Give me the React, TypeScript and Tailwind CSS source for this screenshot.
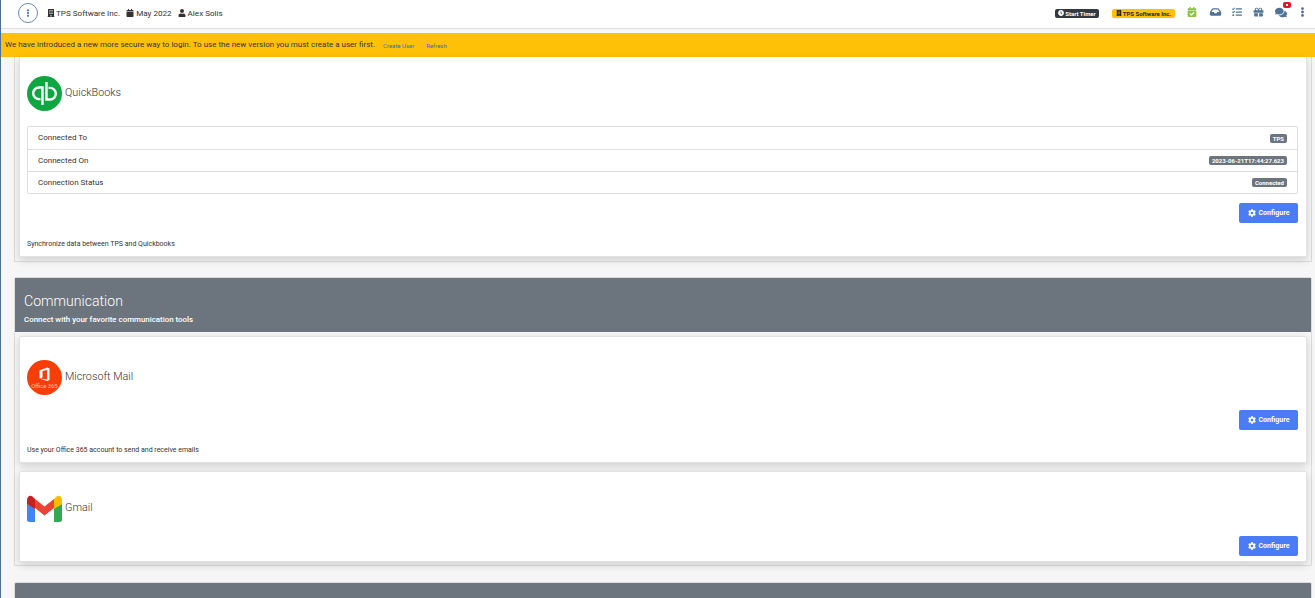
import type { ReactNode } from "react";
import {
  FaBuilding,
  FaCalendar,
  FaCalendarCheck,
  FaClock,
  FaCog,
  FaComments,
  FaEllipsisV,
  FaGift,
  FaInbox,
  FaTasks,
  FaUser,
} from "react-icons/fa";

function ConfigureButton() {
  return (
    <button className="flex h-5 w-[59px] items-center justify-center gap-[3px] rounded-[2px] bg-[#4a7cf6] text-[7px] font-bold text-white">
      <FaCog className="h-2 w-2" />
      Configure
    </button>
  );
}

function Card({ className, children }: { className: string; children: ReactNode }) {
  return (
    <div className={`mx-1 border border-[#e2e2e2] bg-white pr-2 pl-[7px] shadow-[0_3px_8px_rgba(0,0,0,0.16)] ${className}`}>
      {children}
    </div>
  );
}

function Title({ logo, name }: { logo: ReactNode; name: string }) {
  return (
    <div className="flex items-center gap-[3px]">
      {logo}
      <span className="text-[10.8px] font-light text-[#333]">{name}</span>
    </div>
  );
}

function Row({ label, value }: { label: string; value: string }) {
  return (
    <div className="flex h-[22px] items-center justify-between border-b border-[#dedede] px-[10px] first:h-[23px] last:h-[21px] last:border-b-0">
      <span className="text-[8px] text-[#333]">{label}</span>
      <span className="rounded-[2px] bg-[#6c757d] px-[3px] py-px text-[6px] leading-[7px] font-bold text-white">{value}</span>
    </div>
  );
}

function QuickBooksLogo() {
  return (
    <svg viewBox="0 0 35 35" className="h-[35px] w-[35px] shrink-0">
      <circle cx="17.500" cy="17.500" r="17.500" fill="#0ea640" />
      <path
        d="M12 11.500h3.500V29M12 11.500a5.800 5.800 0 0 0 0 11.600h1.500M23 23.500h-3.500V6M23 23.500a5.800 5.800 0 0 0 0-11.600h-1.500"
        fill="none"
        stroke="#fff"
        strokeWidth="2.400"
      />
    </svg>
  );
}

function OfficeLogo() {
  return (
    <svg viewBox="0 0 35 35" className="h-[35px] w-[35px] shrink-0">
      <circle cx="17.500" cy="17.500" r="17.500" fill="#f83e08" />
      <path d="M12.500 10.500L20 7.500l2.500 1V20L20 21l-7.500-2.500 7.500 1V10l-4.500 1v6.500l-3 1z" fill="#fff" />
      <text x="17.500" y="28" textAnchor="middle" fontSize="5.800" fill="#ffc9b5" fontFamily="Roboto, sans-serif">
        Office 365
      </text>
    </svg>
  );
}

function GmailLogo() {
  return (
    <svg viewBox="0 0 35 27" className="h-[27px] w-[35px] shrink-0">
      <path d="M0 9v15.500A2.500 2.500 0 0 0 2.500 27H8V13z" fill="#4285f4" />
      <path d="M27 13v14h5.500a2.500 2.500 0 0 0 2.500-2.500V9z" fill="#34a853" />
      <path d="M8 4l9.500 7.500L27 4v9l-9.500 7.500L8 13z" fill="#ea4335" />
      <path d="M0 5.500v3.500l8 5V4L5.500 1.500C3-.5 0 1.500 0 5.500z" fill="#c5221f" />
      <path d="M35 5.500v3.500l-8 5V4l2.500-2.500C32-.5 35 1.500 35 5.500z" fill="#fbbc04" />
    </svg>
  );
}

export default function App() {
  return (
    <div className="h-[598px] overflow-hidden border-l border-[#4f6f92] bg-[#f6f6f6] font-['Roboto',sans-serif]">
      <header className="flex h-[29px] items-center justify-between border-b border-[#e0e0e0] bg-white pr-[10px] pb-[2px] pl-[17px]">
        <div className="flex items-center text-[8.100px] text-[#333]">
          <span className="mr-[9px] flex h-5 w-5 items-center justify-center rounded-full border border-[#6b8bb0] text-[#5a7ca3]">
            <FaEllipsisV className="h-2 w-2" />
          </span>
          <FaBuilding className="mr-px h-2 w-2 text-[#333]" />
          <span className="mr-[6px]">TPS Software Inc.</span>
          <FaCalendar className="mr-[2px] h-2 w-2" />
          <span className="mr-[6px]">May 2022</span>
          <FaUser className="mr-[2px] h-2 w-2" />
          <span>Alex Solis</span>
        </div>
        <div className="flex items-center">
          <span className="mr-[13px] flex h-[9px] w-[44px] items-center justify-center gap-px rounded-[2px] bg-[#343a40] text-[6px] font-bold text-white">
            <FaClock className="h-[6px] w-[6px]" />
            Start Timer
          </span>
          <span className="mr-[12px] flex h-[9px] w-[63px] items-center justify-center gap-px rounded-[2px] bg-[#ffc107] text-[6px] font-bold text-[#222]">
            <FaBuilding className="h-[6px] w-[6px]" />
            TPS Software Inc.
          </span>
          <div className="mb-[2px] flex items-center">
            <FaCalendarCheck className="mr-[12px] h-[10px] w-[10px] text-[#8bc34a]" />
            <FaInbox className="mr-[9px] h-[10px] w-[13px] text-[#4f7396]" />
            <FaTasks className="mr-[10px] h-[10px] w-[12px] text-[#4f7396]" />
            <FaGift className="mr-[11px] h-[10px] w-[11px] text-[#4f7396]" />
            <span className="relative mr-[13px]">
              <FaComments className="h-[11px] w-[12px] text-[#4f7396]" />
              <span className="absolute -top-[5px] -right-[4px] flex h-[6px] w-2 items-center justify-center rounded-[2px] bg-[#e8112d]">
                <span className="h-[2px] w-[2px] bg-white" />
              </span>
            </span>
            <FaEllipsisV className="h-[10px] w-[5px] text-[#4f7396]" />
          </div>
        </div>
      </header>

      <div className="mt-1 flex h-6 items-center bg-[#ffc107] pl-1 text-[8px] text-[#333]">
        <span>We have introduced a new more secure way to login. To use the new version you must create a user first.</span>
        <span className="ml-2 text-[6px] text-[#2f6fd0]">Create User</span>
        <span className="ml-3 text-[6px] text-[#2f6fd0]">Refresh</span>
      </div>

      <div className="mr-[3px] ml-[13px]">
        <section className="h-[205px] border-x border-b border-[#dcdcdc]">
          <Card className="h-[200px] border-t-0 pt-[19px]">
            <Title logo={<QuickBooksLogo />} name="QuickBooks" />
            <div className="mt-[15px] rounded-[2px] border border-[#dedede]">
              <Row label="Connected To" value="TPS" />
              <Row label="Connected On" value="2023-06-21T17:44:27.623" />
              <Row label="Connection Status" value="Connected" />
            </div>
            <div className="mt-[9px] flex justify-end">
              <ConfigureButton />
            </div>
            <p className="mt-4 text-[7px] text-[#333]">Synchronize data between TPS and Quickbooks</p>
          </Card>
        </section>

        <section className="mt-[15px] h-[289px] rounded-t-[2px] border border-[#dcdcdc]">
          <div className="flex h-[54px] flex-col justify-center gap-[5px] bg-[#6c757d] px-[9px] pt-[8px] text-white">
            <h2 className="text-[14.100px] leading-[17px] font-light">Communication</h2>
            <p className="text-[7.900px] leading-[10px] font-medium">Connect with your favorite communication tools</p>
          </div>
          <Card className="mt-1 h-[127px] rounded-[2px] pt-[23px]">
            <Title logo={<OfficeLogo />} name="Microsoft Mail" />
            <div className="mt-[15px] flex justify-end">
              <ConfigureButton />
            </div>
            <p className="mt-[15px] text-[7px] text-[#333]">Use your Office 365 account to send and receive emails</p>
          </Card>
          <Card className="mt-[8px] h-[91px] rounded-[2px] pt-[23px]">
            <Title logo={<GmailLogo />} name="Gmail" />
            <div className="mt-[14px] flex justify-end">
              <ConfigureButton />
            </div>
          </Card>
        </section>

        <section className="mt-4 h-8 rounded-t-[2px] border border-[#dcdcdc] bg-[#6c757d]" />
      </div>
    </div>
  );
}
